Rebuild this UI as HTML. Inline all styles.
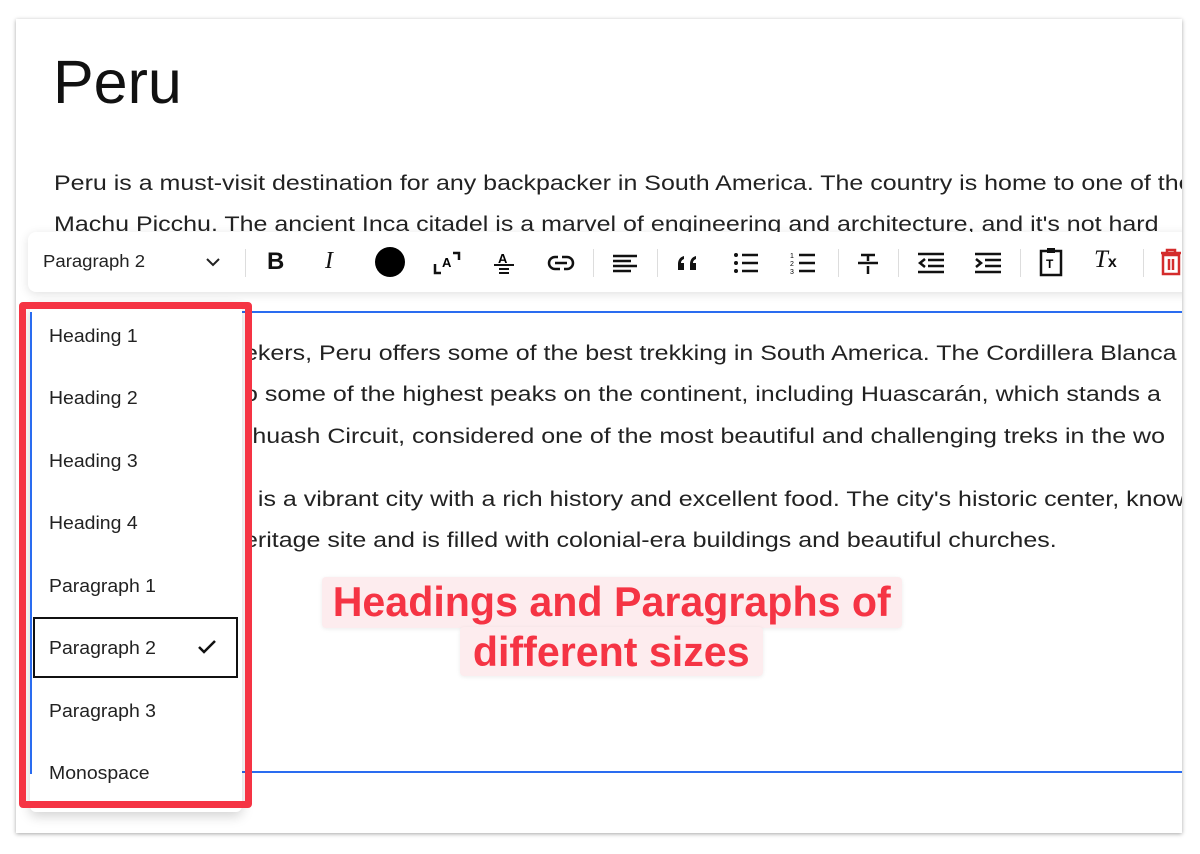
<!DOCTYPE html>
<html><head><meta charset="utf-8">
<style>
*{box-sizing:border-box;margin:0;padding:0}
body{width:1200px;height:854px;background:#fff;position:relative;overflow:hidden;font-family:"Liberation Sans",sans-serif;color:#111}
.card{position:absolute;left:16px;top:19px;width:1166px;height:814px;background:#fff;box-shadow:0 1px 4px rgba(0,0,0,.35);overflow:hidden}
.abs{position:absolute;white-space:nowrap}
h1{position:absolute;left:37px;top:28px;font-size:61px;font-weight:500;letter-spacing:0px;color:#111}
.p{font-size:21px;color:#222;transform:scaleX(1.19);transform-origin:0 0}
.tb{position:absolute;left:12px;top:213px;width:1170px;height:60px;background:#fff;box-shadow:0 2px 10px rgba(0,0,0,.12);border-radius:8px}
.sep{position:absolute;top:17px;width:1px;height:28px;background:#ddd}
.ic{position:absolute;top:18px}
.editor{position:absolute;left:14px;top:292px;width:1170px;height:462px;border:2px solid #2a6cf0;border-right:none}
.dd{position:absolute;left:30px;top:304px;width:212px;height:508px;background:#fff;box-shadow:0 4px 12px rgba(0,0,0,.18);border-radius:6px}
.it{position:absolute;left:19px;font-size:18px;color:#222;transform:scaleX(1.08);transform-origin:0 0}
.red{position:absolute;left:19px;top:302px;width:233px;height:506px;border:7px solid #f53444;border-radius:4px}
.ann{position:absolute;background:#fdecee;color:#f53444;font-weight:bold;text-align:center;border-radius:4px;box-shadow:0 1px 4px rgba(0,0,0,.08);line-height:50px;overflow:hidden}
.ann span{display:inline-block;font-size:42px;transform:scaleX(.98);white-space:nowrap}
</style></head><body>
<div class="card">
<h1>Peru</h1>
<div class="abs p" style="left:38px;top:153px">Peru is a must-visit destination for any backpacker in South America. The country is home to one of the</div>
<div class="abs p" style="left:38px;top:194px">Machu Picchu. The ancient Inca citadel is a marvel of engineering and architecture, and it's not hard</div>
<div class="tb">
 <div class="abs" style="left:15px;top:19px;font-size:17.5px;color:#222;transform:scaleX(1.06);transform-origin:0 0">Paragraph 2</div>
 <svg class="ic" style="left:177px;top:23px" width="16" height="14" viewBox="0 0 16 14"><path d="M2 4l6 6 6-6" fill="none" stroke="#222" stroke-width="2"/></svg>
 <div class="sep" style="left:217px"></div>
 <div class="abs" style="left:239px;top:16px;font-size:24px;font-weight:bold">B</div>
 <div class="abs" style="left:297px;top:16px;font-size:24px;font-style:italic;font-family:'Liberation Serif',serif">I</div>
 <div class="abs" style="left:347px;top:15px;width:30px;height:30px;border-radius:50%;background:#000"></div>
 <svg class="ic" style="left:405px" width="28" height="26" viewBox="0 0 28 26"><path d="M2 14v9h6M20 3h6v7" fill="none" stroke="#111" stroke-width="2.5"/><text x="9" y="17" font-size="13" font-weight="bold" font-family="Liberation Sans">A</text></svg>
 <svg class="ic" style="left:464px" width="24" height="26" viewBox="0 0 24 26"><text x="6" y="13" font-size="13" font-weight="bold" font-family="Liberation Sans">A</text><path d="M2 15h20M7 19h10M7 23h10" stroke="#111" stroke-width="2"/></svg>
 <svg class="ic" style="left:518px" width="30" height="26" viewBox="0 0 30 26"><rect x="3" y="7" width="24" height="12" rx="6" fill="none" stroke="#111" stroke-width="2.5"/><path d="M9 13h12" stroke="#111" stroke-width="2.5"/><path d="M14 5v4M16 17v4" stroke="#fff" stroke-width="4"/></svg>
 <div class="sep" style="left:565px"></div>
 <svg class="ic" style="left:583px" width="28" height="26" viewBox="0 0 28 26"><path d="M2 6h24M2 11h18M2 16h24M2 21h18" stroke="#111" stroke-width="2.5"/></svg>
 <div class="sep" style="left:629px"></div>
 <svg class="ic" style="left:647px" width="28" height="26" viewBox="0 0 28 26"><path d="M3 20v-6c0-4 2-7 6-8v3c-2 1-3 2-3 4h3v7zM15 20v-6c0-4 2-7 6-8v3c-2 1-3 2-3 4h3v7z" fill="#111"/></svg>
 <svg class="ic" style="left:704px" width="28" height="26" viewBox="0 0 28 26"><circle cx="4" cy="5" r="2" fill="#111"/><circle cx="4" cy="13" r="2" fill="#111"/><circle cx="4" cy="21" r="2" fill="#111"/><path d="M10 5h16M10 13h16M10 21h16" stroke="#111" stroke-width="2.5"/></svg>
 <svg class="ic" style="left:761px" width="28" height="26" viewBox="0 0 28 26"><text x="1" y="8" font-size="7" font-family="Liberation Sans">1</text><text x="1" y="16" font-size="7" font-family="Liberation Sans">2</text><text x="1" y="24" font-size="7" font-family="Liberation Sans">3</text><path d="M10 5h16M10 13h16M10 21h16" stroke="#111" stroke-width="2.5"/></svg>
 <div class="sep" style="left:810px"></div>
 <svg class="ic" style="left:826px" width="28" height="26" viewBox="0 0 28 26"><path d="M4 13h20M7 5h14M14 5v6M14 16v8" stroke="#111" stroke-width="2.5"/></svg>
 <div class="sep" style="left:870px"></div>
 <svg class="ic" style="left:888px" width="30" height="26" viewBox="0 0 30 26"><path d="M2 4h26M12 10h16M12 16h16M2 22h26M9 9l-5 4 5 4" fill="none" stroke="#111" stroke-width="2.5"/></svg>
 <svg class="ic" style="left:945px" width="30" height="26" viewBox="0 0 30 26"><path d="M2 4h26M12 10h16M12 16h16M2 22h26M3 9l5 4-5 4" fill="none" stroke="#111" stroke-width="2.5"/></svg>
 <div class="sep" style="left:992px"></div>
 <svg class="ic" style="left:1010px;top:15px" width="26" height="30" viewBox="0 0 26 30"><rect x="3" y="4" width="20" height="24" fill="none" stroke="#111" stroke-width="2.5"/><rect x="9" y="1" width="8" height="5" fill="#111"/><text x="8" y="21" font-size="12" font-weight="bold" font-family="Liberation Sans">T</text></svg>
 <div class="abs" style="left:1066px;top:14px;font-size:25px;font-style:italic;font-family:'Liberation Serif',serif">T<span style="font-size:16px;font-style:normal;font-weight:bold;font-family:'Liberation Sans'">x</span></div>
 <div class="sep" style="left:1115px"></div>
 <svg class="ic" style="left:1131px;top:16px" width="24" height="28" viewBox="0 0 24 28"><path d="M2 5h20M8 5V2h8v3M4 7h16v19H4z" fill="none" stroke="#d42c2c" stroke-width="2.5"/><path d="M10 11v11M14 11v11" stroke="#d42c2c" stroke-width="2.5"/></svg>
</div>
<div class="editor"></div>
<div class="abs p" style="left:228px;top:323px">ekers, Peru offers some of the best trekking in South America. The Cordillera Blanca r</div>
<div class="abs p" style="left:228px;top:364px">o some of the highest peaks on the continent, including Huascarán, which stands a</div>
<div class="abs p" style="left:228px;top:406px">rhuash Circuit, considered one of the most beautiful and challenging treks in the wo</div>
<div class="abs p" style="left:228px;top:469px">, is a vibrant city with a rich history and excellent food. The city's historic center, know</div>
<div class="abs p" style="left:228px;top:510px">eritage site and is filled with colonial-era buildings and beautiful churches.</div>
</div>
<div class="dd">
 <div class="it" style="top:22px">Heading 1</div>
 <div class="it" style="top:84px">Heading 2</div>
 <div class="it" style="top:147px">Heading 3</div>
 <div class="it" style="top:209px">Heading 4</div>
 <div class="it" style="top:272px">Paragraph 1</div>
 <div style="position:absolute;left:3px;top:313px;width:205px;height:61px;border:2px solid #111"></div>
 <div class="it" style="top:334px">Paragraph 2</div>
 <svg style="position:absolute;left:167px;top:335px" width="20" height="16" viewBox="0 0 20 16"><path d="M2 8l5 5L18 2" fill="none" stroke="#111" stroke-width="2.5"/></svg>
 <div class="it" style="top:397px">Paragraph 3</div>
 <div class="it" style="top:459px">Monospace</div>
</div>
<div style="position:absolute;left:30px;top:312px;width:2px;height:462px;background:#2a6cf0"></div>
<div class="red"></div>
<div class="ann" style="left:322px;top:577px;width:580px;height:51px"><span>Headings and Paragraphs of</span></div>
<div class="ann" style="left:460px;top:627px;width:303px;height:49px"><span>different sizes</span></div>
</body></html>
